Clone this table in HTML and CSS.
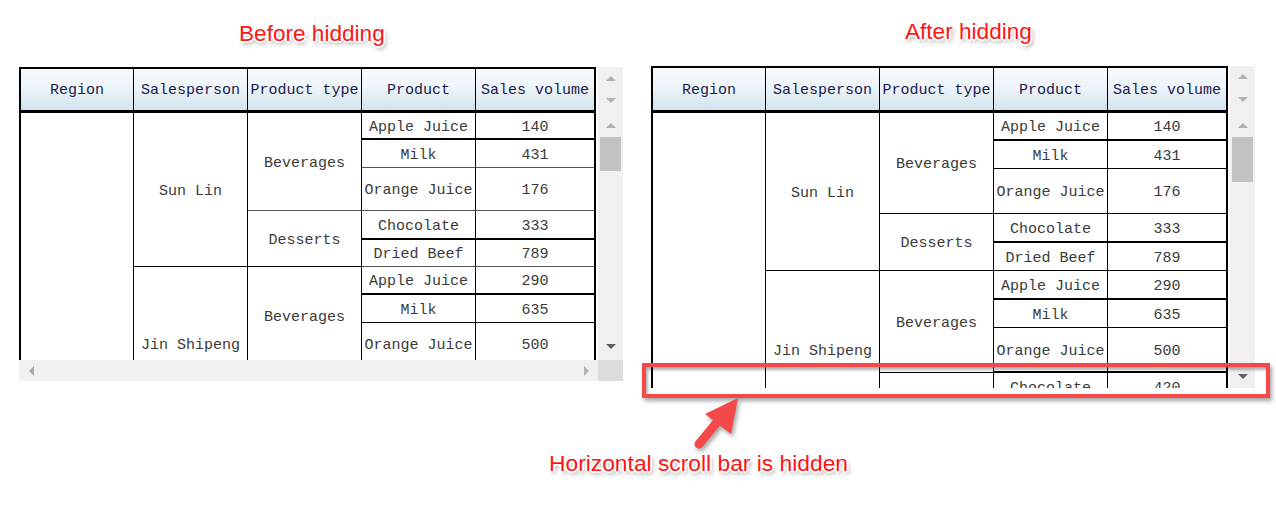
FILE: index.html
```html
<!DOCTYPE html>
<html>
<head>
<meta charset="utf-8">
<link rel="stylesheet" href="styles.css">
</head>
<body>
<div class="page">
  <div class="panel panel-before">
    <div class="title"><span class="label">Before hidding</span></div>
    <div class="gridview with-hs">
      <div class="viewport">
        <div class="tbl">
          <div class="h">Region</div>
          <div class="h">Salesperson</div>
          <div class="h">Product type</div>
          <div class="h">Product</div>
          <div class="h last">Sales volume</div>

          <div class="c region"></div>
          <div class="c sp5">Sun Lin</div>
          <div class="c sp3 soft">Beverages</div>
          <div class="c thick">Apple Juice</div>
          <div class="c val thick">140</div>
          <div class="c soft">Milk</div>
          <div class="c val soft">431</div>
          <div class="c soft">Orange Juice</div>
          <div class="c val soft">176</div>
          <div class="c sp2">Desserts</div>
          <div class="c thick">Chocolate</div>
          <div class="c val thick">333</div>
          <div class="c soft">Dried Beef</div>
          <div class="c val soft">789</div>
          <div class="c sp5">Jin Shipeng</div>
          <div class="c sp3">Beverages</div>
          <div class="c thick">Apple Juice</div>
          <div class="c val thick">290</div>
          <div class="c">Milk</div>
          <div class="c val">635</div>
          <div class="c thick">Orange Juice</div>
          <div class="c val thick">500</div>
          <div class="c sp2">Desserts</div>
          <div class="c">Chocolate</div>
          <div class="c val">420</div>
          <div class="c">Dried Beef</div>
          <div class="c val">156</div>
        </div>
      </div>
      <div class="vscroll">
        <span class="tri up light a1"></span>
        <span class="tri down light a2"></span>
        <span class="tri up light a3"></span>
        <span class="thumb"></span>
        <span class="fill"></span>
        <span class="tri down dark a4"></span>
      </div>
      <div class="hscroll">
        <span class="tri left"></span>
        <span class="tri right"></span>
      </div>
      <div class="corner"></div>
    </div>
  </div>

  <div class="panel panel-after">
    <div class="title"><span class="label">After hidding</span></div>
    <div class="gridview no-hs">
      <div class="viewport">
        <div class="tbl">
          <div class="h">Region</div>
          <div class="h">Salesperson</div>
          <div class="h">Product type</div>
          <div class="h">Product</div>
          <div class="h last">Sales volume</div>

          <div class="c region"></div>
          <div class="c sp5">Sun Lin</div>
          <div class="c sp3">Beverages</div>
          <div class="c thick">Apple Juice</div>
          <div class="c val thick">140</div>
          <div class="c">Milk</div>
          <div class="c val">431</div>
          <div class="c">Orange Juice</div>
          <div class="c val">176</div>
          <div class="c sp2">Desserts</div>
          <div class="c thick">Chocolate</div>
          <div class="c val thick">333</div>
          <div class="c">Dried Beef</div>
          <div class="c val">789</div>
          <div class="c sp5">Jin Shipeng</div>
          <div class="c sp3">Beverages</div>
          <div class="c thick">Apple Juice</div>
          <div class="c val thick">290</div>
          <div class="c">Milk</div>
          <div class="c val">635</div>
          <div class="c thick">Orange Juice</div>
          <div class="c val thick">500</div>
          <div class="c sp2">Desserts</div>
          <div class="c">Chocolate</div>
          <div class="c val">420</div>
          <div class="c">Dried Beef</div>
          <div class="c val">156</div>
        </div>
      </div>
      <div class="vscroll">
        <span class="tri up light a1"></span>
        <span class="tri down light a2"></span>
        <span class="tri up light a3"></span>
        <span class="thumb"></span>
        <span class="fill"></span>
        <span class="tri down dark a4"></span>
      </div>
    </div>
  </div>
</div>

<div class="caption"><span class="label">Horizontal scroll bar is hidden</span></div>

<div class="annot-box"></div>
<svg class="annot-arrow" width="60" height="60" viewBox="0 0 60 60">
  <line x1="9" y1="49" x2="28" y2="26" stroke="#f54848" stroke-width="9" stroke-linecap="round"/>
  <polygon points="48,3 15,19 41,39" fill="#f54848"/>
</svg>
</body>
</html>
```

FILE: styles.css
```css
html, body {
  margin: 0;
  padding: 0;
  background: #ffffff;
}

body {
  width: 1276px;
  height: 506px;
  position: relative;
  overflow: hidden;
  font-family: "Liberation Sans", Arial, sans-serif;
}

.page {
  display: flex;
  align-items: flex-start;
  gap: 28px;
  padding-left: 19px;
}

.panel {
  display: flex;
  flex-direction: column;
  width: 604px;
}

.title {
  box-sizing: border-box;
  display: flex;
}

.panel-before .title {
  height: 67px;
  padding-top: 21px;
  padding-left: 220px;
}

.panel-after .title {
  height: 66px;
  padding-top: 19px;
  padding-left: 254px;
}

.label {
  font-family: "Liberation Sans", Arial, sans-serif;
  font-size: 22.6px;
  line-height: 26px;
  color: #ff1414;
  white-space: nowrap;
  text-shadow:
    -1px -1px 0 #fff, 1px -1px 0 #fff, -1px 1px 0 #fff, 1px 1px 0 #fff,
    0 -2px 0 #fff, 0 2px 0 #fff, -2px 0 0 #fff, 2px 0 0 #fff,
    2px 3px 4px rgba(0, 0, 0, 0.45);
}

.caption .label {
  font-size: 22.8px;
}

/* grid widget */
.gridview {
  display: grid;
  grid-template-columns: 579px 25px;
}

.with-hs {
  grid-template-rows: 293px 21px;
}

.no-hs {
  grid-template-rows: 322px;
}

.viewport {
  overflow: hidden;
  background: #fff;
}

.tbl {
  box-sizing: border-box;
  width: 577px;
  display: grid;
  grid-template-columns: 113px 114px 114px 114px 118px;
  border: 2px solid #000;
  font-family: "Liberation Mono", "DejaVu Sans Mono", monospace;
  font-size: 15px;
  color: #3a3a3a;
}

.panel-before .tbl {
  grid-template-rows: 44px 27px 28px 43px 29px 27px 28px 28px 43px 29px 27px;
}

.panel-after .tbl {
  grid-template-rows: 45px 28px 28px 45px 29px 28px 29px 28px 45px 29px 28px;
}

.h, .c {
  box-sizing: border-box;
  display: flex;
  align-items: center;
  justify-content: center;
  white-space: nowrap;
  overflow: hidden;
}

.h {
  background: linear-gradient(to bottom, #f6fafd 0%, #eef5fa 45%, #d0e3ec 100%);
  border-right: 1px solid #000;
  border-bottom: 3px solid #000;
  color: #1a1a50;
  padding-top: 2px;
}

.h.last {
  border-right: 0;
}

.c {
  border-right: 1px solid #000;
  border-bottom: 1px solid #000;
  padding-top: 3px;
}

.c.soft {
  border-bottom-color: #555;
}

.c.thick {
  border-bottom-width: 2px;
}

.c.val {
  border-right: 0;
}

.region { grid-row: span 10; }
.sp5 { grid-row: span 5; }
.sp3 { grid-row: span 3; }
.sp2 { grid-row: span 2; }

/* scrollbars */
.vscroll {
  background: #f0f0f0;
  display: flex;
  flex-direction: column;
  align-items: center;
}

.tri {
  display: block;
  width: 0;
  height: 0;
  flex: none;
}

.tri.up {
  border-left: 5px solid transparent;
  border-right: 5px solid transparent;
  border-bottom: 5px solid #b2b2b2;
}

.tri.down {
  border-left: 5px solid transparent;
  border-right: 5px solid transparent;
  border-top: 5px solid #b2b2b2;
}

.tri.down.dark {
  border-top-color: #606060;
}

.thumb {
  display: block;
  width: 21px;
  background: #c2c2c2;
  flex: none;
}

.fill {
  flex: 1;
}

.panel-before .a1 { margin-top: 9px; }
.panel-before .a2 { margin-top: 17px; }
.panel-before .a3 { margin-top: 20px; }
.panel-before .thumb { margin-top: 9px; height: 34px; }
.panel-before .a4 { margin-bottom: 11px; }

.panel-after .a1 { margin-top: 8px; }
.panel-after .a2 { margin-top: 18px; }
.panel-after .a3 { margin-top: 21px; }
.panel-after .thumb { margin-top: 9px; height: 45px; }
.panel-after .a4 { margin-bottom: 9px; }

.hscroll {
  background: #f0f0f0;
  display: flex;
  align-items: center;
  justify-content: space-between;
  padding: 0 9px 0 10px;
}

.tri.left {
  border-top: 5px solid transparent;
  border-bottom: 5px solid transparent;
  border-right: 5px solid #a8a8a8;
}

.tri.right {
  border-top: 5px solid transparent;
  border-bottom: 5px solid transparent;
  border-left: 5px solid #b4b4b4;
}

.corner {
  background: #dcdcdc;
}

/* annotation */
.caption {
  margin-top: 62px;
  padding-left: 549px;
}

.annot-box {
  position: absolute;
  left: 642px;
  top: 363px;
  width: 628px;
  height: 35px;
  box-sizing: border-box;
  border: 4px solid #f54848;
  box-shadow: 2px 3px 4px rgba(0, 0, 0, 0.35), inset 2px 3px 3px rgba(0, 0, 0, 0.3);
}

.annot-arrow {
  position: absolute;
  left: 690px;
  top: 395px;
  filter: drop-shadow(2px 3px 2px rgba(0, 0, 0, 0.35));
}
```
